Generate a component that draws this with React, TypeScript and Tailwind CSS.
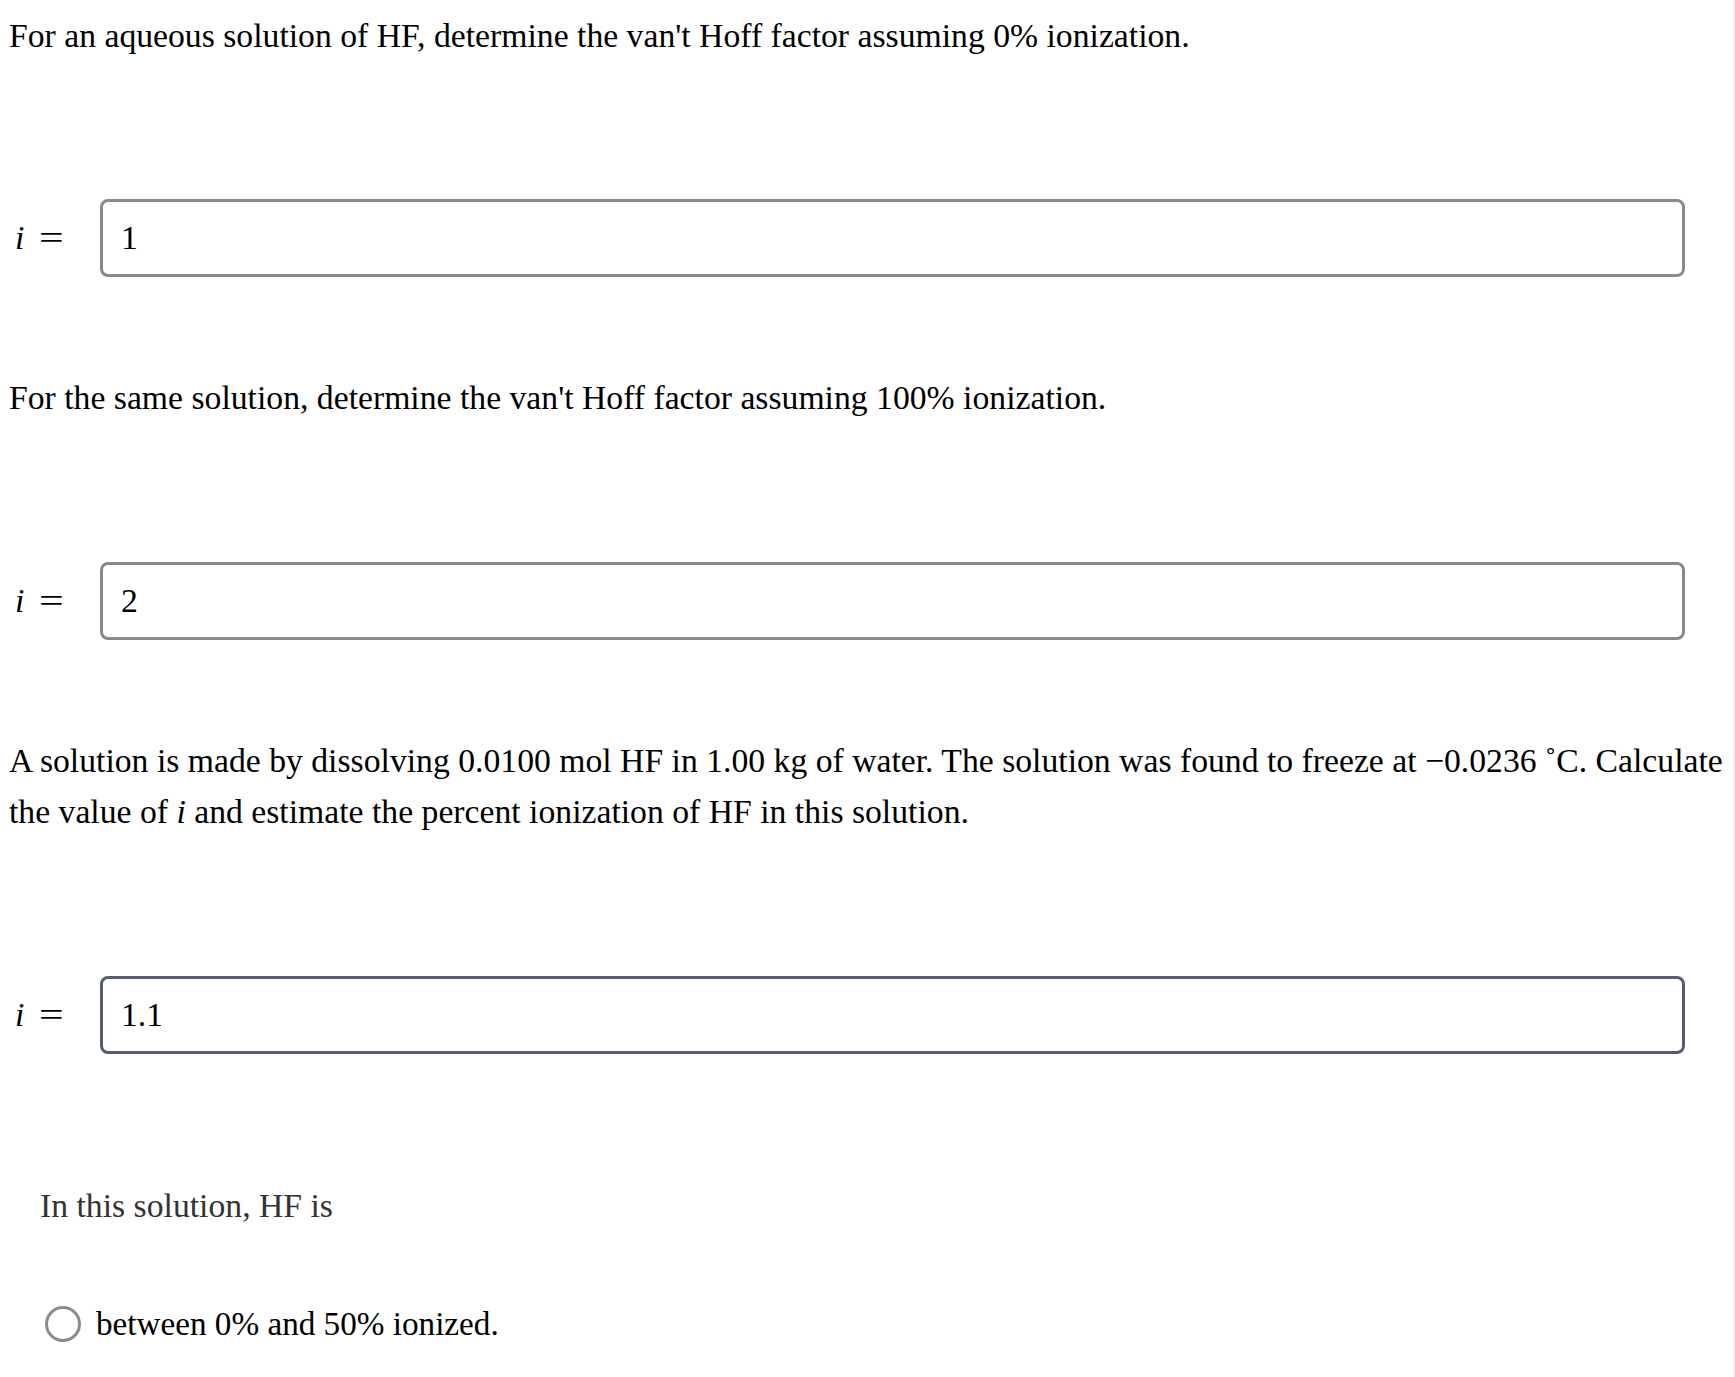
import React from 'react';

const serif = "font-['Liberation_Serif','Times_New_Roman',serif]";

interface AnswerRowProps {
  value: string;
  active?: boolean;
}

const AnswerRow: React.FC<AnswerRowProps> = ({ value, active }) => {
  return (
    <div className="flex items-center">
      <div className="flex w-[100px] shrink-0 items-center pl-[15px] text-[33.7px] leading-[48px]">
        <span className="italic">i</span>
        <span className="ml-[15px] inline-block origin-left scale-x-[1.3]">=</span>
      </div>
      <div
        className={`flex h-[78px] w-[1585px] items-center rounded-[8px] border-[3px] bg-white pl-[18px] text-[33.7px] ${
          active ? 'border-[#545d70]' : 'border-[#8a8a8a]'
        }`}
      >
        {value}
      </div>
    </div>
  );
};

const RadioOption: React.FC<{ label: string }> = ({ label }) => {
  return (
    <label className="flex items-center gap-[15px] pl-[45px]">
      <span className="h-[36px] w-[36px] shrink-0 rounded-full border-[3px] border-[#8c8c8c] bg-white"></span>
      <span className="text-[33.2px] leading-[48px]">{label}</span>
    </label>
  );
};

export default function App() {
  return (
    <div className={`min-h-screen w-full overflow-hidden border-r-2 border-[#ececec] bg-white text-black ${serif}`}>
      <div className="pt-[12px]">
        {/* Part 1 */}
        <p className="pl-[9px] text-[33.7px] leading-[48px]">
          For an aqueous solution of HF, determine the van't Hoff factor assuming 0% ionization.
        </p>
        <div className="mt-[139px]">
          <AnswerRow value="1" />
        </div>

        {/* Part 2 */}
        <p className="mt-[97px] pl-[9px] text-[33.7px] leading-[48px]">
          For the same solution, determine the van't Hoff factor assuming 100% ionization.
        </p>
        <div className="mt-[140px]">
          <AnswerRow value="2" />
        </div>

        {/* Part 3 */}
        <p className="mt-[95px] pl-[9px] text-[33.7px] leading-[51px]">
          A solution is made by dissolving 0.0100 mol HF in 1.00 kg of water. The solution was found to freeze at
          −0.0236 ˚C. Calculate the value of <span className="italic">i</span> and estimate the percent ionization of
          HF in this solution.
        </p>
        <div className="mt-[139px]">
          <AnswerRow value="1.1" active />
        </div>

        <p className="mt-[128px] pl-[40px] text-[33.7px] leading-[48px] text-[#333333]">In this solution, HF is</p>

        <div className="mt-[70px] flex flex-col gap-[28px]">
          <RadioOption label="between 0% and 50% ionized." />
          <RadioOption label="between 50% and 100% ionized." />
        </div>
      </div>
    </div>
  );
}
